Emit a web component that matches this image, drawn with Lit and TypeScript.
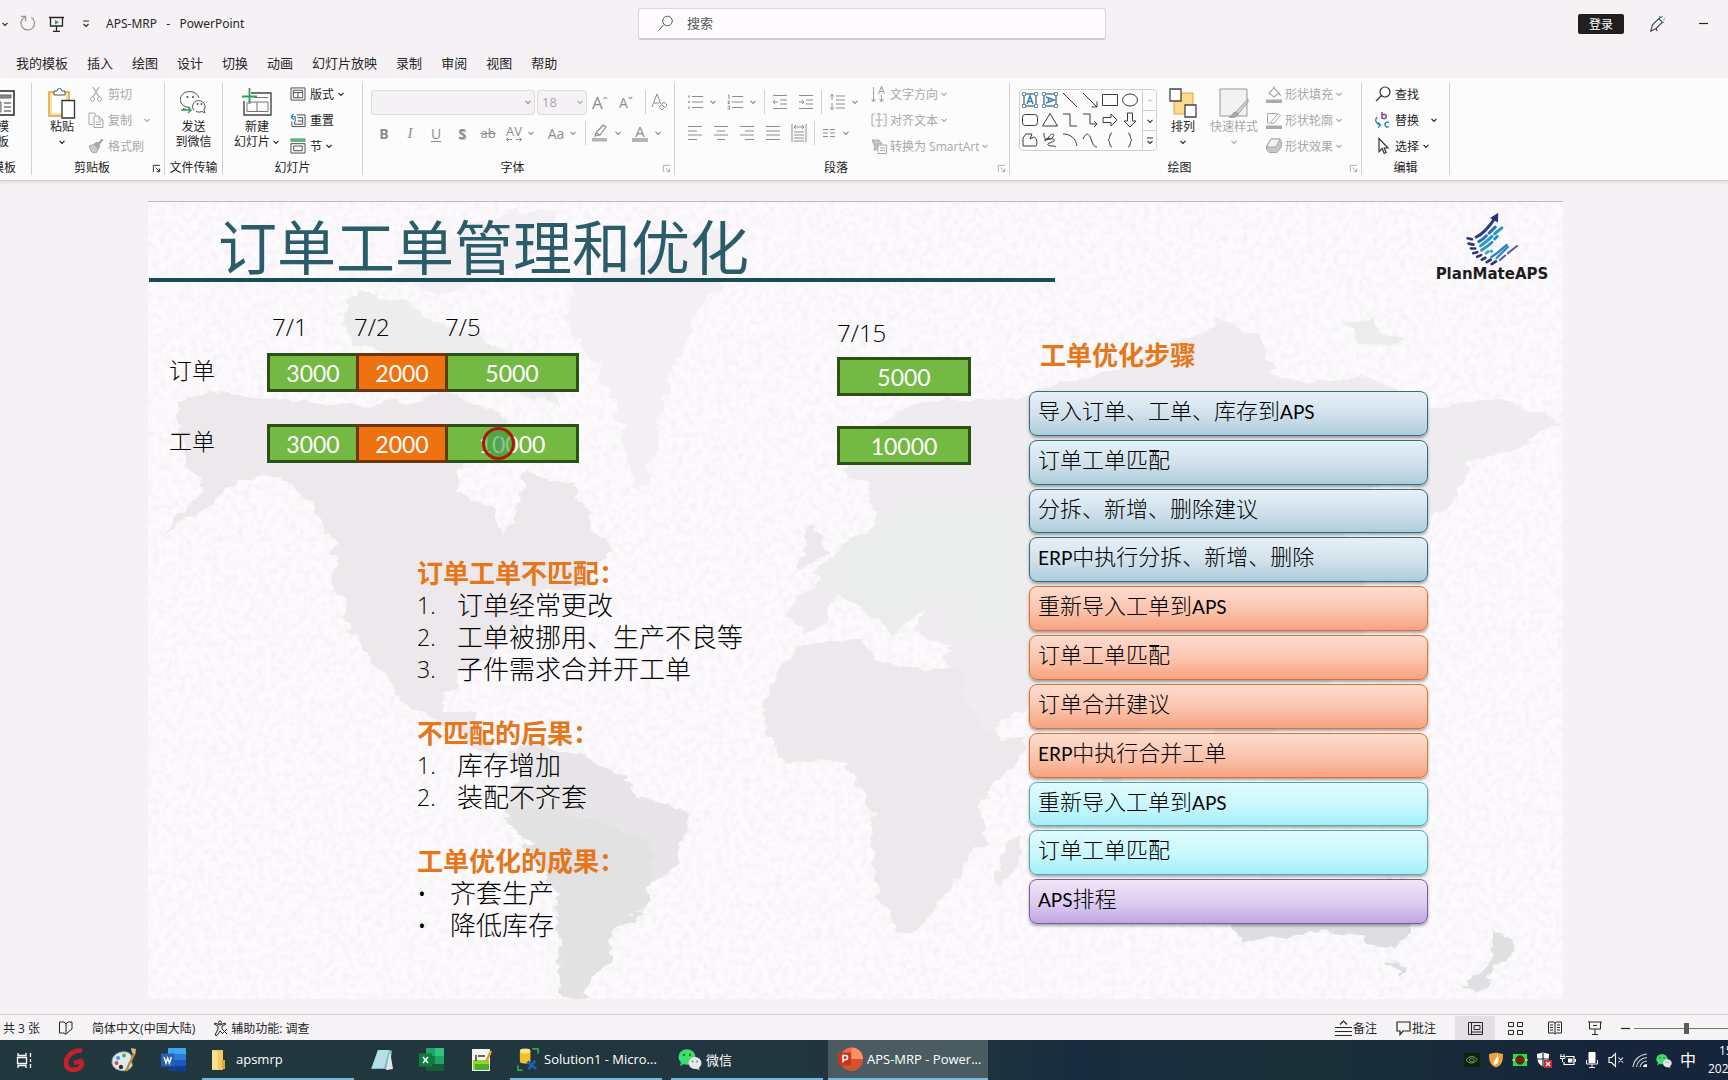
import { LitElement, html, svg, css, nothing, TemplateResult } from "lit";
import { customElement, property } from "lit/decorators.js";

/* ---------- icon set ---------- */

type Glyph = { w: number; h: number; body: TemplateResult };
const g = (w: number, h: number, body: TemplateResult): Glyph => ({ w, h, body });

const wechat = svg`
  <ellipse cx="9" cy="9" rx="8.5" ry="7.8" fill="#3fdc6e"/><path d="M3 14l-1 4 4-2z" fill="#3fdc6e"/>
  <circle cx="6" cy="7" r="1.2" fill="#1d6b38"/><circle cx="12" cy="7" r="1.2" fill="#1d6b38"/>
  <ellipse cx="17" cy="15" rx="6.5" ry="6" fill="#e6e8e8"/><path d="M20 19l2 3-4-1z" fill="#e6e8e8"/>
  <circle cx="14.8" cy="13.5" r="1" fill="#888"/><circle cx="19" cy="13.5" r="1" fill="#888"/>`;

const ICONS: Record<string, Glyph> = {
  chev: g(8, 8, svg`<path d="M1.5 2.8L4 5.3 6.5 2.8" stroke-width="1.2"/>`),
  launch: g(10, 10, svg`<path d="M1.5 9V1.5H9M4 4l4.5 4.500M8.500 5v3.500H5"/>`),
  redo: g(18, 18, svg`<path d="M2 1.500h5v5M6.500 2a7.200 7.200 0 1 0 6.500 .500" stroke="#999" stroke-width="1.4"/>`),
  present: g(16, 16, svg`<path d="M0 1.500h15M1.500 2v8h12V2M7.500 10v5M4 15.500h7" stroke-width="1.3"/><path d="M6 4l4 2.200-4 2.200z" fill="#3b9a5a" stroke="none"/>`),
  quick: g(8, 8, svg`<path d="M1 1h6M1.500 4L4 6.500 6.500 4" stroke-width="1.2"/>`),
  search: g(17, 17, svg`<circle cx="10.500" cy="6" r="4.800" stroke="#555"/><path d="M7 9.500L1.500 15.500" stroke="#555"/>`),
  pen: g(20, 20, svg`<path d="M3 18l2-7 7-7 4 4-7 7zM12 4l3-2M9 15l1 3" stroke="#444" stroke-width="1.2"/><path d="M13 1v2M16 1l-1 2M19 4l-2 1M18 8h-2" stroke="#2a8fc4"/>`),
  minus: g(9, 9, svg`<path d="M0 4.500h9" stroke-width="1.200"/>`),
  template: g(26, 28, svg`<rect x="1" y="2" width="24" height="24" stroke-width="1.500"/><path d="M5 6h17v3H5z" fill="#888" stroke="#666"/><path d="M5 13h7v10H5z" fill="#ccc" stroke="#666"/><path d="M15 14h7M15 18h7M15 22h7" stroke="#777" stroke-width="1.500"/>`),
  paste: g(30, 32, svg`<path d="M2 5h20v24H2z" fill="#fbe0a8" stroke="#e5a02e" stroke-width="1.500"/><path d="M5 8h14v18H5z" fill="#fff" stroke="none"/><path d="M7 8V4h3a2.500 2.500 0 0 1 5 0h3v4z" fill="#fff" stroke="#555"/><path d="M15 13.500h12.500V31H15z" fill="#fff" stroke="#333" stroke-width="1.300"/>`),
  cut: g(16, 16, svg`<path d="M5 1l6 10M11 1L5 11" stroke-width="1.200"/><circle cx="4.500" cy="13" r="2"/><circle cx="11.500" cy="13" r="2"/>`),
  copy: g(16, 16, svg`<path d="M5 12.500H1V1h5l2 2"/><path d="M6 4h5l4 4v7.500H6zM11 4v4h4M8 10h5M8 12.500h5"/>`),
  brush: g(16, 16, svg`<path d="M1 8l6-2 4 4-3 5-2-1-1 1-2-2z" fill="#ccc"/><path d="M6 6l3-2 1 1 4-4 1 1-4 5 1 1-2 3z" fill="#aaa"/>`),
  send: g(28, 26, svg`<path d="M4 18l-1 2 3-1M10 17.500A9.500 8 0 1 1 19 8" stroke="#555"/><circle cx="7.500" cy="7" r="1" fill="#444" stroke="none"/><circle cx="13" cy="7" r="1" fill="#444" stroke="none"/><path d="M14 20.500A6.300 6 0 1 1 24 20l1 3-3-1.500a7 7 0 0 1-6 0" stroke="#555"/><circle cx="17.500" cy="14" r=".9" fill="#444" stroke="none"/><circle cx="21.500" cy="14" r=".9" fill="#444" stroke="none"/><path d="M1 20h10M8 17l3 3-3 3" stroke="#3a9c5c" stroke-width="1.400"/>`),
  newslide: g(32, 30, svg`<path d="M10 5h20v22H3V13" stroke="#444" stroke-width="1.400"/><path d="M13 9.500h14M6 14v9.500h21V14H7M16 14v9.500" stroke="#777"/><path d="M8.500 0v16M1 8.500h15" stroke="#2f9e57" stroke-width="1.800"/>`),
  layout: g(17, 15, svg`<path d="M1 1h15v13H1zM3.500 3.500h10v8h-10zM3.500 6h10M8.500 6v5.500" stroke="#444"/>`),
  reset: g(17, 16, svg`<path d="M7 2h9v12.500H2V9M8 5h5.500v7H5V9M8 8.500h5" stroke="#444"/><path d="M1 4h4.500v5M1 4l3-3M1 4l3 3" stroke="#2683bd" stroke-width="1.300"/>`),
  section: g(17, 17, svg`<path d="M1 1h15v2.500H1z" fill="#7dc298" stroke="#3a9c5c"/><path d="M1 6h15v10H1zM4 8.500h9v5H4z" stroke="#444"/>`),
  fontclear: g(18, 18, svg`<path d="M2 14L7 1l4 10M3.500 10h6"/><path d="M9 14l5-5 3 3-5 5zM11.500 11.500l3 3"/>`),
  hilite: g(16, 18, svg`<path d="M4 9l7-8 3 2-6 8zM4 9l-1 3 5-1" stroke-width="1.200"/><path d="M0 14h15v3.500H0z" fill="#b5b3b5" stroke="none"/>`),
  bullets: g(16, 16, svg`<path d="M5 2.500h11M5 8h11M5 13.500h11"/><path d="M1 1.500h2v2H1zM1 7h2v2H1zM1 12.500h2v2H1z" fill="#aaa" stroke="none"/>`),
  numbers: g(16, 16, svg`<path d="M5 2.500h11M5 8h11M5 13.500h11M1 1h1v4M0.500 7h2L1 9.500h2M0.500 12h2v3h-2"/>`),
  outdent: g(16, 16, svg`<path d="M1 1.500h14M8 6h7M8 10h7M1 14.500h14M6 8H1M3 6L1 8l2 2"/>`),
  indent: g(16, 16, svg`<path d="M1 1.500h14M8 6h7M8 10h7M1 14.500h14M1 8h5M4 6l2 2-2 2"/>`),
  spacing: g(16, 16, svg`<path d="M7 2h9M7 6h9M7 10h9M7 14h9M3 0v6M3 9v7M1 2.500L3 .500l2 2M1 13.500l2 2 2-2"/>`),
  left: g(16, 16, svg`<path d="M1 1.500h14M1 6h9M1 10h14M1 14.500h9"/>`),
  center: g(16, 16, svg`<path d="M1 1.500h14M4 6h8M1 10h14M4 14.500h8"/>`),
  right: g(16, 16, svg`<path d="M1 1.500h14M6 6h9M1 10h14M6 14.500h9"/>`),
  justify: g(16, 16, svg`<path d="M1 1.500h14M1 6h14M1 10h14M1 14.500h14"/>`),
  distribute: g(16, 18, svg`<path d="M1 0v18M15 0v18M3 3h10M5 1L3 3l2 2M11 1l2 2-2 2M3 8h10M3 11h10M3 14h10M3 17h10"/>`),
  columns: g(14, 14, svg`<path d="M1 3.500h5M8 3.500h5M1 7h5M8 7h5M1 10.500h5M8 10.500h5"/>`),
  textdir: g(16, 17, svg`<path d="M2.500 1v14M.500 13l2 2.500 2-2.500M10.500 9v6M8.500 13l2 2.500 2-2.500M7.500 8l3-7.500 3 7.500M8.500 5.500h4" stroke-width="1.100"/>`),
  aligntext: g(16, 16, svg`<path d="M4 2H1v12h3M12 2h3v12h-3M4 8h8M8 1v14M6 3l2-2 2 2M6 13l2 2 2-2"/>`),
  smartart: g(16, 16, svg`<path d="M1 2h7l3 4H5l2 3-2 3H3l1-3z" fill="#ccc"/><path d="M7 7h8.500v8.500H7zM9 10h5M9 12.500h5" fill="#fff"/>`),
  arrange: g(28, 30, svg`<path d="M5 5h19v21H5z" fill="#fbd98d" stroke="#e2a440"/><path d="M1 1h11v12H1zM16 17h11v12H16z" fill="#fff" stroke="#444" stroke-width="1.300"/>`),
  styles: g(30, 30, svg`<path d="M1 1h27v27H1z" fill="#f3f1f3" stroke="#999"/><path d="M29 11L17 24l2 2 10-12z" fill="#d8d6d8" stroke="#999"/><path d="M17 24c-4 0-3 4-7 5 4 1 9 0 9-3z" fill="#aaa" stroke="#999"/>`),
  fill: g(16, 17, svg`<path d="M3 7l5-5 5 5-5 4zM8 2V0M13 7l1.500 3" stroke-width="1.200"/><path d="M0 13.500h16V17H0z" fill="#aaa8aa" stroke="none"/>`),
  outline: g(16, 17, svg`<path d="M11 1.500H1.500V11H4M5 10l7-8.500 2.500 2L8 11l-3 .500z"/><path d="M0 13.500h16V17H0z" fill="#aaa8aa" stroke="none"/>`),
  effect: g(16, 16, svg`<path d="M5 1h9l1.500 3v5L11 14.500H3L.500 11V8z" fill="#c8c6c8"/><path d="M5 1h9l-4 8H.500z" fill="#f2f0f2"/>`),
  find: g(16, 16, svg`<circle cx="10" cy="6" r="5" stroke="#333" stroke-width="1.200"/><path d="M6.500 9.500L1 15" stroke="#333" stroke-width="1.300"/>`),
  replace: g(16, 18, svg`<path d="M2 6C-.500 9 1 13 5 14M3 11.500l2.500 2.500L3 16.500" stroke="#2b82b8" stroke-width="1.300"/><path d="M7 1v7M7 5.500a2.200 2.200 0 1 1 0 .1" stroke="#8c3a9a" stroke-width="1.400"/><path d="M14 11.500a2.500 2.500 0 1 0 0 4" stroke="#2b82b8" stroke-width="1.400"/>`),
  select: g(16, 18, svg`<path d="M4 1.500v13l3.200-3 2 5 2-1-2-4.500H13z" stroke="#333" stroke-width="1.200"/>`),
  /* status bar */
  book: g(16, 14, svg`<path d="M8 3L6 1H1.500v11H6l2 1.500 1-1M8 3v10M8 3l2-2h4v7M9 12l5-4"/>`),
  access: g(16, 16, svg`<circle cx="7" cy="2.500" r="1.500"/><path d="M1 4l4 2v3l-3 6 2 .500L7 11l2 2M13 4L9 6v3M1 4l1-1 5 2 5-2 1 1M9 9l5 5M14 9l-5 5"/>`),
  notes: g(17, 16, svg`<path d="M0 7.500h17M0 11.500h17M0 15.500h17M5 4.500L8.500 1 12 4.500" stroke-width="1.200"/>`),
  comment: g(15, 15, svg`<path d="M1 1h13v9H7l-3 3.500V10H1z" stroke-width="1.200"/>`),
  normal: g(15, 13, svg`<path d="M.500.500h14v12H.500zM3.500.500v12M6 3.500h6v4H6zM3.500 10h11"/>`),
  sorter: g(15, 13, svg`<path d="M.500.500h5v4h-5zM9.500.500h5v4h-5zM.500 8.500h5v4h-5zM9.500 8.500h5v4h-5z"/>`),
  reading: g(14, 14, svg`<path d="M.500 1h5L7 2l1.500-1h5v11h-5L7 13l-1.500-1h-5zM7 2v11M2 4h3M2 6.500h3M2 9h3M9 4h3M9 6.500h3M9 9h3"/>`),
  show: g(14, 14, svg`<path d="M0 1h14M1.500 1v7h11V1M7 8v5M4 13.500h6M5 4.500h4"/>`),
  /* gallery shapes */
  tb: g(16, 16, svg`<path d="M2 2h12v12H2z" stroke="#333"/><path d="M.500.500h3v3h-3zM12.500.500h3v3h-3zM.500 12.500h3v3h-3zM12.500 12.500h3v3h-3z" fill="#fff" stroke="#4a90b8"/><path d="M5 12l3-8 3 8M6 9.500h4" stroke="#2683bd" stroke-width="1.500"/>`),
  tbv: g(16, 16, svg`<path d="M2 2h12v12H2z" stroke="#333"/><path d="M.500.500h3v3h-3zM12.500.500h3v3h-3zM.500 12.500h3v3h-3zM12.500 12.500h3v3h-3z" fill="#fff" stroke="#4a90b8"/><path d="M4 5l8 3-8 3M6.500 6v4" stroke="#2683bd" stroke-width="1.500"/>`),
  line: g(16, 16, svg`<path d="M1 1l14 14"/>`),
  arrow: g(16, 16, svg`<path d="M1 1l14 14M15 9.500V15H9.500"/>`),
  rect: g(16, 16, svg`<path d="M.500 2.500h15v11H.500z"/>`),
  oval: g(16, 16, svg`<ellipse cx="8" cy="8" rx="7.500" ry="6"/>`),
  round: g(16, 16, svg`<rect x=".500" y="2.500" width="15" height="11" rx="3"/>`),
  tri: g(16, 16, svg`<path d="M8 1.500L15.500 14H.500z"/>`),
  elbow: g(16, 16, svg`<path d="M1 2h7v12h7"/>`),
  elbowa: g(16, 16, svg`<path d="M1 2h7v10h7M12 9l3 3-3 3"/>`),
  rarrow: g(16, 16, svg`<path d="M1 5.500h8V2l6 6-6 6v-3.500H1z"/>`),
  darrow: g(16, 16, svg`<path d="M5.500 1v8H2l6 6 6-6h-3.500V1z"/>`),
  free: g(16, 16, svg`<path d="M1 14V6l3-4h6l-2 5 4-2c4 1 3 9 2 9z"/>`),
  scrib: g(16, 16, svg`<path d="M2 1c-1 8 5 8 9 4 3-4-2-4-5 1s-5 2-2 1c5-1 10 0 8 2s-8 2-6 4 7 0 8 2"/>`),
  arc: g(16, 16, svg`<path d="M1 2c8 0 13 5 14 12"/>`),
  curve: g(16, 16, svg`<path d="M1 7c3-7 6-6 8 0s3 8 6 8"/>`),
  lbrace: g(16, 16, svg`<path d="M10 1C7 1 8.500 7 6 8c2.500 1 1 7 4 7"/>`),
  rbrace: g(16, 16, svg`<path d="M6 1c3 0 1.500 6 4 7-2.500 1-1 7-4 7"/>`),
  up: g(8, 8, svg`<path d="M2 5.500l2-2 2 2" stroke="#aaa"/>`),
  /* task bar */
  taskview: g(17, 17, svg`<path d="M2 1v2.500h8V1M2 16v-2.500h8V16M1.500 5.500h9v6h-9zM14.500 1v4M14.500 12v4M14.500 7v3" stroke="#fff" stroke-width="1.300"/>`),
  gee: g(24, 24, svg`<path d="M20 3C12 1 4 8 4 15c0 6 5 8 12 6 4-2 5-6 3-8l-7 2" stroke="#c81f2c" stroke-width="4.500"/>`),
  paint: g(26, 26, svg`<path d="M1 15C1 8 8 4 15 5c5 1 7 5 5 8-1 2 2 3 1 6-2 4-8 6-13 4-4-1-7-4-7-8z" fill="#dfe9f0" stroke="#8fa7b8"/><circle cx="7" cy="11" r="2" fill="#3c9be0" stroke="none"/><circle cx="13" cy="8.500" r="2" fill="#4cb04c" stroke="none"/><circle cx="5.500" cy="16" r="2" fill="#e04a3a" stroke="none"/><circle cx="10" cy="20" r="2.200" fill="#333" stroke="none"/><path d="M24 5l-9 19" stroke="#c98a35" stroke-width="2.500"/><path d="M20 1l5 1-1 5-3-1z" fill="#d9b98a" stroke="none"/>`),
  word: g(26, 24, svg`<g stroke="none"><path d="M7 0h18v6H7z" fill="#41a5ee"/><path d="M7 6h18v6H7z" fill="#2b7cd3"/><path d="M7 12h18v6H7z" fill="#185abd"/><path d="M7 18h18v5H7z" fill="#103f91"/><path d="M0 5.500h13v13H0z" fill="#2a5fb8"/></g><path d="M3 9l2 6 1.700-5L8.400 15l2-6" stroke="#fff" stroke-width="1.400"/>`),
  folder: g(15, 24, svg`<g stroke="none"><path d="M1 3h11v20H1z" fill="#f3c95c"/><path d="M1 3l6 2v18l-6-1z" fill="#fbe08f"/><path d="M11 13h3v9h-3z" fill="#d9a93e"/></g>`),
  notepad: g(24, 24, svg`<g stroke="none"><path d="M8 2h12l2 1-3 19-4-1H1z" fill="#7fb9c6"/><path d="M8 2h11l-5 18H2z" fill="#b5e0e9"/><path d="M20 3l3 18-7 1z" fill="#dfe6e8"/></g>`),
  excel: g(26, 24, svg`<g stroke="none"><path d="M7 0h18v23H7z" fill="#21a366"/><path d="M16 0h9v8h-9z" fill="#33c481"/><path d="M7 8h9v8H7z" fill="#107c41"/><path d="M7 16h18v7H7z" fill="#185c37"/><path d="M0 5.500h13v13H0z" fill="#107c41"/></g><path d="M4 9l5 6M9 9l-5 6" stroke="#fff" stroke-width="1.600"/>`),
  npp: g(22, 24, svg`<g stroke="none"><path d="M1 1h18v22H1z" fill="#f4f7ee"/><path d="M2 12h16v10H2z" fill="#8ed82e"/><path d="M4 16h14v6H4z" fill="#4caf2c"/></g><path d="M5 7v6M7 8h7" stroke="#333" stroke-width="1.400"/><path d="M20 3l-5 11" stroke="#e39a2c" stroke-width="2.500"/>`),
  ssms: g(24, 24, svg`<path d="M3 3v11c0 3 11 3 11 0V3z" fill="#f2c12e" stroke="none"/><ellipse cx="8.500" cy="3" rx="5.500" ry="2.500" fill="#fbe48f" stroke="none"/><path d="M16 1h6v5M1 18v5h5" stroke="#3fa04a" stroke-width="1.800"/><path d="M11 14l9 8M19 13l-7 9" stroke="#1f5fb0" stroke-width="2.800"/>`),
  wechat: g(24, 22, svg`<g stroke="none">${wechat}</g>`),
  ppt: g(25, 24, svg`<g stroke="none"><circle cx="13.500" cy="12" r="11.500" fill="#ed6c47"/><path d="M13.500.500A11.500 11.500 0 0 1 25 12H13.500z" fill="#ff8f6b"/><path d="M2 12h23a11.500 11.500 0 0 1-23 0z" fill="#d35230"/><path d="M0 5.500h13v13H0z" fill="#c2371f"/></g><path d="M5 15.500v-7h2.500a2 2 0 0 1 0 4.200H5" stroke="#fff" stroke-width="1.500"/>`),
  nvidia: g(16, 16, svg`<path d="M0 1h16v14H0z" fill="#10200f" stroke="none"/><path d="M2 8c3-5 9-4 11-.500C10 12 5 12 2 8zM5 8c2-2.500 4-2 5.500 0C9 10 6.500 10 5 8" stroke="#6fae5a"/>`),
  shield: g(16, 16, svg`<path d="M1 2l7-1.500L15 2c0 7-1 11-7 13.500C2 13 1 9 1 2z" fill="#f0a13a" stroke="none"/><path d="M9 2c2 4-5 6-3 11 5-1 6-6 3-11z" fill="#fff" stroke="none"/>`),
  green: g(16, 16, svg`<path d="M1 2h14v12H1z" fill="#2bdc3c" stroke="none"/><path d="M0 8h16" stroke="#e6f7d0"/><circle cx="8" cy="8" r="4.200" fill="#8a1418" stroke="#184a18"/>`),
  defender: g(16, 16, svg`<path d="M1 2l6-1.500L13 2c0 7-1 10-6 12.500C2 12 1 9 1 2z" fill="#fff" stroke="none"/><path d="M7 1v13M1 7h12" stroke="#16283c" stroke-width="1.200"/><path d="M8 8h8v8H8z" fill="#c82a35" stroke="none"/><path d="M10 10l4 4M14 10l-4 4" stroke="#fff" stroke-width="1.200"/>`),
  battery: g(16, 16, svg`<path d="M6 4.500h8v8H4V10M15.500 7v3" stroke="#fff" stroke-width="1.200"/><path d="M8 6.500h4.500v4H8z" fill="#fff" stroke="none"/><path d="M1 2v2M4 2v2M0 4.500h5v2H0zM2.500 7v3" stroke="#fff"/>`),
  mic: g(16, 16, svg`<rect x="4.500" y="0" width="7" height="11" rx="1" fill="#fff" stroke="none"/><path d="M2.500 8v4h11V8M8 12v3M5 15.500h6" stroke="#fff"/>`),
  mute: g(16, 16, svg`<path d="M1 5.500h2.500l4-4v13l-4-4H1zM10.500 5.500l4.500 5M15 5.500l-4.500 5" stroke="#fff" stroke-width="1.100"/>`),
  wifi: g(16, 16, svg`<path d="M1 15C2 8 7 3 15 2M4.500 15C5 10 9 6 15 5.500M8 15c.500-3 3-5.500 7-6" stroke="#c8d2dc" stroke-width="1.100"/><path d="M11 15c0-2 2-3 4-3v3z" fill="#fff" stroke="none"/>`),
};

const icon = (name: string, size?: number) => {
  const i = ICONS[name];
  const w = size ?? i.w;
  const h = size ? Math.round((size * i.h) / i.w) : i.h;
  return html`<svg width=${w} height=${h} viewBox="0 0 ${i.w} ${i.h}" fill="none" stroke="currentColor" aria-hidden="true">${i.body}</svg>`;
};

const shared = css`
  * { box-sizing: border-box; }
  button {
    font: inherit; color: inherit; background: none; border: 0; padding: 0; margin: 0;
    display: flex; align-items: center; white-space: nowrap;
  }
  svg { display: block; flex: none; }
`;

/* ---------- title bar and tabs ---------- */

@customElement("title-bar")
class TitleBar extends LitElement {
  static styles = [shared, css`
    :host { display: block; color: #262626; }
    .bar { display: grid; grid-template-columns: 638px minmax(200px, 468px) 1fr; height: 47px; align-items: center; }
    .quick { display: flex; align-items: center; font-size: 13px; gap: 13px; padding-left: 1px; }
    .quick button:first-child { margin-right: -3px; }
    .custom { margin-left: 4px; }
    .caption { white-space: pre; font-family: "Noto Sans", sans-serif; font-size: 12px; padding-left: 3px; }
    .search {
      display: flex; align-items: center; gap: 13px; height: 32px; padding-left: 18px; background: #fdfbfd;
      border: 1px solid #d8d4d8; border-bottom: 2px solid #cdc9cd; border-radius: 3px;
    }
    .search input { flex: 1; min-width: 0; border: 0; outline: 0; background: none; font: inherit; font-size: 13px; padding: 0; }
    .search input::placeholder { color: #555; opacity: 1; }
    .right { display: flex; align-items: center; justify-content: flex-end; padding-right: 20px; }
    .login { background: #1f1f1f; color: #fff; width: 46px; height: 20px; justify-content: center; border-radius: 2px; font-size: 12px; margin-right: 24px; }
    .pen { margin-right: 33px; }
    nav { display: flex; gap: 19px; height: 31px; padding-left: 16px; font-size: 13px; }
  `];
  render() {
    const tabs = ["我的模板", "插入", "绘图", "设计", "切换", "动画", "幻灯片放映", "录制", "审阅", "视图", "帮助"];
    return html`
      <header class="bar">
        <div class="quick">
          <button aria-label="撤消选项">${icon("chev")}</button>
          <button aria-label="重做">${icon("redo", 17)}</button>
          <button aria-label="从头开始">${icon("present")}</button>
          <button class="custom" aria-label="自定义快速访问工具栏">${icon("quick")}</button>
          <span class="caption">APS-MRP   -   PowerPoint</span>
        </div>
        <label class="search">${icon("search")}<input type="search" placeholder="搜索" aria-label="搜索" /></label>
        <div class="right">
          <button class="login">登录</button>
          <button class="pen" aria-label="画笔">${icon("pen", 18)}</button>
          <button aria-label="最小化">${icon("minus")}</button>
        </div>
      </header>
      <nav>${tabs.map((t) => html`<button>${t}</button>`)}</nav>`;
  }
}

/* ---------- ribbon ---------- */

const small = (ic: string, text: string, chev = 0) => html`
  <button class="small">${icon(ic, 16)}<span>${text}</span>${chev ? html`<span class=${chev > 1 ? "far" : "near"}>${icon("chev")}</span>` : nothing}</button>`;
const tool = (ic: string, label: string) => html`<button aria-label=${label}>${icon(ic)}</button>`;
const drop = (label: string) => html`<button class="drop" aria-label="${label}选项">${icon("chev")}</button>`;

@customElement("office-ribbon")
class OfficeRibbon extends LitElement {
  static styles = [shared, css`
    :host { display: block; background: #fdfcfd; border-bottom: 1px solid #d4d0d4; box-shadow: 0 1px 3px #d9d5d9; color: #222; font-size: 12px; position: relative; }
    .ribbon { display: flex; padding: 5px 0; }
    .group { flex: none; display: flex; flex-direction: column; height: 92px; border-right: 1px solid #d2cfd2; }
    .body { display: flex; flex: 1; }
    .foot { display: flex; align-items: center; height: 14px; line-height: 14px; }
    .foot span { flex: 1; text-align: center; white-space: nowrap; }
    .foot button { width: 12px; }
    .off { color: #a9a6a9; }
    .dim { color: #8f8c8f; }
    .big { flex-direction: column; justify-content: flex-start; line-height: 15px; padding-top: 3px; }
    .big .pic { height: 33px; display: flex; align-items: center; justify-content: center; }
    .big .row { display: flex; align-items: center; gap: 2px; }
    .big .tip { height: 15px; display: flex; align-items: center; }
    .col { display: flex; flex-direction: column; justify-content: space-between; height: 76px; margin-top: -1px; }
    .small { height: 24px; gap: 4px; }
    .near { margin-left: -1px; }
    .far { margin-left: 7px; }
    .g0 { width: 32px; overflow: hidden; align-items: flex-end; }
    .g0 .big { padding-right: 16px; align-items: flex-end; }
    .g0 .big span { margin-right: 6px; }
    .g0 .foot { padding-right: 15px; }
    .g1 { width: 133px; } .g1 .body { padding-left: 14px; gap: 10px; } .g1 .big { width: 32px; }
    .g2 { width: 58px; } .g2 .big { width: 57px; }
    .g3 { width: 140px; } .g3 .body { padding-left: 10px; gap: 9px; } .g3 .big { width: 48px; }
    .g4 { width: 312px; }
    .g5 { width: 335px; }
    .g6 { width: 352px; } .g6 .body { padding-left: 9px; gap: 10px; }
    .g7 { width: 88px; } .g7 .body { padding-left: 13px; }
    .lines { display: flex; flex-direction: column; gap: 7px; padding: 7px 0 0 8px; }
    .line { display: flex; align-items: center; height: 24px; }
    .combo { position: relative; display: flex; align-items: center; border: 1px solid #dedade; background: #f5f2f5; border-radius: 3px; height: 25px; }
    .combo select { appearance: none; border: 0; background: none; font: inherit; color: inherit; width: 100%; height: 100%; padding: 0 4px; opacity: 1; }
    .combo svg { position: absolute; right: 2px; }
    .face { width: 164px; margin-right: 2px; } .size { width: 50px; }
    .letters { font-size: 15px; }
    .letters button { justify-content: center; width: 26px; }
    .letters .drop, .pads .drop { width: 8px; }
    .b { font-weight: 700; } .i { font-style: italic; font-family: "Liberation Serif", serif; } .u { text-decoration: underline; text-underline-offset: 2px; }
    .s { font-weight: 700; text-shadow: 1px 1px 1px #bbb; } .st { text-decoration: line-through; }
    .f13 { font-size: 13px; } .f14 { font-size: 14px; }
    .letters .av { flex-direction: column; line-height: 12px; font-size: 13px; }
    .letters .tint { flex-direction: column; width: 16px; line-height: 14px; }
    .swatch { width: 16px; height: 4px; background: #b5b3b5; }
    .letters .w16 { width: 16px; }
    .gap6 { width: 6px; } .gap8 { width: 8px; } .gap10 { width: 10px; }
    .grow { font-size: 17px; }
    .sep { width: 1px; height: 24px; background: #d2cfd2; }
    .pads { display: flex; flex-direction: column; gap: 7px; width: 196px; padding: 7px 0 0 12px; }
    .pads .line { gap: 10px; }
    .pads .drop { margin-left: -4px; }
    .pads .sep { margin: 0 -3px; }
    .gallery { display: grid; grid-template-columns: 1fr 15px; width: 138px; height: 62px; margin-top: 6px; border: 1px solid #d2cfd2; border-radius: 4px; color: #3a3a3a; }
    .shapes { display: grid; grid-template-columns: repeat(6, 20px); align-items: center; padding-left: 2px; }
    .scroll { display: grid; grid-template-rows: 1fr 1fr 1fr; border-left: 1px solid #d2cfd2; }
    .scroll button { justify-content: center; }
    .scroll button + button { border-top: 1px solid #d2cfd2; }
    .styles { width: 50px; }
    .arr { width: 32px; }
    .g6 .col { margin-left: -3px; }
    .g5 .small, .g6 .small { gap: 3px; }
  `];
  private foot(label: string, launch = false, dim = false) {
    return html`<div class="foot"><span>${label}</span>${launch ? html`<button class=${dim ? "off" : ""} aria-label="${label}设置">${icon("launch", 9)}</button>` : nothing}</div>`;
  }
  render() {
    const shapes = ["tb", "tbv", "line", "arrow", "rect", "oval", "round", "tri", "elbow", "elbowa", "rarrow", "darrow", "free", "scrib", "arc", "curve", "lbrace", "rbrace"];
    return html`<div class="ribbon">
      <section class="group g0"><div class="body"><button class="big"><div class="pic">${icon("template")}</div><span>模</span><span>板</span></button></div>${this.foot("模板")}</section>

      <section class="group g1"><div class="body">
        <button class="big"><span class="pic">${icon("paste")}</span><span>粘贴</span><span class="tip">${icon("chev")}</span></button>
        <div class="col off">${small("cut", "剪切")}${small("copy", "复制", 2)}${small("brush", "格式刷")}</div>
      </div>${this.foot("剪贴板", true)}</section>

      <section class="group g2"><div class="body"><button class="big"><span class="pic">${icon("send")}</span><span>发送</span><span>到微信</span></button></div>${this.foot("文件传输")}</section>

      <section class="group g3"><div class="body">
        <button class="big"><span class="pic">${icon("newslide")}</span><span>新建</span><span class="row">幻灯片${icon("chev")}</span></button>
        <div class="col">${small("layout", "版式", 1)}${small("reset", "重置")}${small("section", "节", 1)}</div>
      </div>${this.foot("幻灯片")}</section>

      <section class="group g4"><div class="body"><div class="lines dim">
        <div class="line letters">
          <label class="combo face f13"><select aria-label="字体"><option></option></select>${icon("chev")}</label>
          <label class="combo size f13 off"><select aria-label="字号"><option>18</option></select>${icon("chev")}</label>
          <button class="grow" aria-label="增大字号">A<sup class="f13">ˆ</sup></button>
          <button class="f14" aria-label="减小字号">A<sup class="f13">ˇ</sup></button>
          <i class="gap6"></i><i class="sep"></i><button aria-label="清除格式">${icon("fontclear")}</button>
        </div>
        <div class="line letters">
          <button class="b f14">B</button><button class="i">I</button><button class="u f14">U</button><button class="s f14">S</button><button class="st f13">ab</button>
          <button class="av"><span>AV</span><svg width="16" height="5" viewBox="0 0 16 5" fill="none" stroke="currentColor"><path d="M0 2.500h6M10 2.500h6M2.500.500l-2 2 2 2M13.500.500l2 2-2 2"/></svg></button>${drop("字符间距")}
          <i class="gap8"></i><button class="f14">Aa</button>${drop("更改大小写")}
          <i class="gap8"></i><i class="sep"></i><i class="gap6"></i>
          <button class="w16" aria-label="突出显示">${icon("hilite")}</button><i class="gap6"></i>${drop("突出显示")}
          <i class="gap10"></i><button class="tint"><span>A</span><span class="swatch"></span></button><i class="gap6"></i>${drop("字体颜色")}
        </div>
      </div></div>${this.foot("字体", true, true)}</section>

      <section class="group g5"><div class="body">
        <div class="pads dim">
          <div class="line">${tool("bullets", "项目符号")}${drop("项目符号")}${tool("numbers", "编号")}${drop("编号")}<i class="sep"></i>${tool("outdent", "减少缩进")}${tool("indent", "增加缩进")}<i class="sep"></i>${tool("spacing", "行距")}${drop("行距")}</div>
          <div class="line">${tool("left", "左对齐")}${tool("center", "居中")}${tool("right", "右对齐")}${tool("justify", "两端对齐")}${tool("distribute", "分散对齐")}<i class="sep"></i>${tool("columns", "分栏")}${drop("分栏")}</div>
        </div>
        <div class="col off">${small("textdir", "文字方向", 1)}${small("aligntext", "对齐文本", 1)}${small("smartart", "转换为 SmartArt", 1)}</div>
      </div>${this.foot("段落", true, true)}</section>

      <section class="group g6"><div class="body">
        <div class="gallery"><div class="shapes">${shapes.map((s) => icon(s))}</div>
          <div class="scroll"><button aria-label="上一行">${icon("up")}</button><button aria-label="下一行">${icon("chev")}</button><button aria-label="更多形状">${icon("quick")}</button></div></div>
        <button class="big arr"><span class="pic">${icon("arrange")}</span><span>排列</span><span class="tip">${icon("chev")}</span></button>
        <button class="big styles off"><span class="pic">${icon("styles")}</span><span>快速样式</span><span class="tip">${icon("chev")}</span></button>
        <div class="col off">${small("fill", "形状填充", 1)}${small("outline", "形状轮廓", 1)}${small("effect", "形状效果", 1)}</div>
      </div>${this.foot("绘图", true, true)}</section>

      <section class="group g7"><div class="body"><div class="col">${small("find", "查找")}${small("replace", "替换", 2)}${small("select", "选择", 1)}</div></div>${this.foot("编辑")}</section>
    </div>`;
  }
}

/* ---------- slide ---------- */

type Tone = "green" | "orange";
type Cell = { v: string; tone: Tone; w: number; pointer?: boolean };

@customElement("order-bar")
class OrderBar extends LitElement {
  @property({ attribute: false }) cells: Cell[] = [];
  static styles = [shared, css`
    :host { display: flex; height: 39px; font: 23px Lato, "Noto Sans", sans-serif; color: #fff; }
    .cell { position: relative; display: flex; align-items: center; justify-content: center; border: 3px solid #2c5016; background: #74b943; }
    .cell + .cell { border-left-width: 0; }
    .cell.joined { border-right-width: 0; }
    .cell.orange { background: #ee7210; border-color: #6e340a; border-left: 3px solid #6e340a; border-right: 3px solid #5a3c10; }
    .ring { position: absolute; left: 34px; top: 0; width: 33px; height: 33px; border: 3px solid #b3150c; border-radius: 50%; background: #2f9e3590; }
    .beam { display: block; width: 2px; height: 17px; margin: 5px 0 0 14px; background: #6e8f8f; }
  `];
  render() {
    return this.cells.map((c, i) => html`<div class="cell ${c.tone} ${this.cells[i + 1]?.tone === "orange" ? "joined" : ""}" style="width:${c.w}px">
      <span>${c.v}</span>${c.pointer ? html`<span class="ring"><i class="beam"></i></span>` : nothing}</div>`);
  }
}

@customElement("slide-view")
class SlideView extends LitElement {
  static styles = [shared, css`
    :host { display: block; position: relative; border-top: 1px solid #bdbabd; background: #fcfafc; color: #000; overflow: hidden; }
    .map { position: absolute; inset: 0; width: 100%; height: 100%; }
    .content { position: relative; display: flex; flex-direction: column; }
    .head { display: flex; justify-content: space-between; height: 80px; }
    h1 { margin: 0 0 0 1px; flex: 0 1 906px; padding: 12px 0 0 69px; border-bottom: 4px solid #174c59; color: #2a5d69; font-size: 59px; font-weight: 400; line-height: 66px; height: 80px; white-space: nowrap; }
    .logo { display: flex; flex-direction: column; align-items: center; width: 116px; margin: 10px 13px 0 0; font: 700 15px "DejaVu Sans", sans-serif; line-height: 16px; color: #1d1d1f; }
    .main { display: flex; justify-content: space-between; padding-right: 135px; }
    .charts { display: flex; padding-left: 21px; font-size: 24px; }
    .chart { display: grid; grid-template-columns: 98px 312px; grid-template-rows: 9px 39px 39px; padding-top: 30px; row-gap: 32px; margin-right: 258px; }
    .dates { font-family: "Open Sans", "Noto Sans", sans-serif; font-weight: 300; line-height: 30px; height: 30px; }
    .chart .dates { grid-column: 2; display: grid; grid-template-columns: 82px 91px 1fr; padding-left: 5px; }
    .name { font-size: 23px; line-height: 35px; font-weight: 300; }
    .late { display: grid; grid-template-rows: 9px 39px 39px; row-gap: 30px; padding-top: 36px; }
    .notes { padding: 92px 0 0 269px; font-size: 26px; font-weight: 300; line-height: 32px; }
    h2 { margin: 0; font-size: 26px; line-height: 32px; color: #e5761a; font-weight: 700; }
    ol, ul { margin: 0 0 32px; padding: 0; list-style: none; }
    li { display: grid; grid-template-columns: 40px 1fr; }
    ul li { grid-template-columns: 33px 1fr; }
    .mark { font-family: "Open Sans", sans-serif; font-size: 23px; }
    .side { flex: 0 0 399px; padding-top: 55px; }
    .side h2 { padding-left: 11px; line-height: 36px; }
    .steps { display: grid; grid-auto-rows: 1fr; gap: 4px; height: 533px; margin: 18px 0 0; }
    .step { display: block; padding: 0 0 0 8px; font: 300 22px "Noto Sans CJK SC", sans-serif; line-height: 35px; border: 1px solid; border-radius: 8px; box-shadow: 0 2px 3px #0005; }
    .latin { font-family: Lato, sans-serif; font-weight: 400; font-size: 19px; }
    .blue { background: linear-gradient(#e6f1f7, #cfe0eb 55%, #adcddb); border-color: #2f6f7f; }
    .red { background: linear-gradient(#fddccf, #fbc3ac 55%, #f6a37f); border-color: #d8742f; }
    .cyan { background: linear-gradient(#e0fbfe, #c8f7fc 55%, #a2effa); border-color: #55aab2; }
    .violet { background: linear-gradient(#efe6f8, #dccbf0 55%, #c0a6e4); border-color: #80589c; }
  `];
  private map() {
    return html`<svg class="map" viewBox="9 23 1541 1526" preserveAspectRatio="none" aria-hidden="true">
      <defs>
        <filter id="rough" x="-5%" y="-5%" width="110%" height="110%">
          <feTurbulence type="fractalNoise" baseFrequency="0.035" numOctaves="3" seed="4"/>
          <feDisplacementMap in="SourceGraphic" scale="26" xChannelSelector="R" yChannelSelector="G"/>
        </filter>
        <filter id="grain" x="0" y="0" width="100%" height="100%">
          <feTurbulence type="fractalNoise" baseFrequency="0.14 0.08" numOctaves="2" seed="9"/>
          <feColorMatrix values="0 0 0 0 .84  0 0 0 0 .82  0 0 0 0 .84  1.1 0 0 0 -.43"/>
        </filter>
      </defs>
      <rect x="9" y="23" width="1541" height="1526" filter="url(#grain)"/>
      <g filter="url(#rough)" fill="#ece8eb">
        <path d="M45 400L90 385 160 405 240 415 300 400 330 385 375 420 400 440 350 520 345 580 385 610 390 660 405 640 420 540 470 560 500 650 515 690 480 760 440 770 400 850 385 900 345 920 345 960 330 970 335 1000 365 1000 370 1050 395 1085 370 1075 330 1020 290 985 255 910 230 840 215 760 210 680 185 600 160 555 130 545 110 565 60 620 20 670 55 600 70 570 45 500z"/>
        <path d="M470 180L640 60 635 180 600 260 570 400 560 560 540 575 525 500 515 400 470 260z" fill="#f3f0f3"/>
        <path d="M270 170L320 110 400 40 455 40 440 120 380 170 330 200z" fill="#f2f0f2"/>
        <path d="M215 250L240 190 280 215 320 250 370 280 440 360 460 420 410 390 340 350 290 320 235 290z" fill="#eeedee"/>
        <path d="M395 1065L430 1060 480 1080 525 1120 540 1160 595 1190 600 1220 580 1300 555 1340 540 1400 515 1420 510 1480 495 1500 485 1548 460 1548 455 1450 455 1340 440 1280 400 1210 400 1180 415 1130z" fill="#e8e5e8"/>
        <path d="M400 1180L440 1180 500 1210 550 1240 560 1330 540 1400 515 1420 510 1480 495 1500 485 1548 460 1548 455 1340 440 1280 405 1220z" fill="#e2e2e3"/>
        <path d="M720 870L790 860 800 900 850 920 890 910 905 980 940 1055 965 1050 950 1100 915 1170 920 1250 890 1310 870 1380 845 1415 825 1420 805 1350 795 1260 800 1200 780 1150 770 1095 740 1090 710 1100 685 1050 678 990 700 910z"/>
        <path d="M930 1310L945 1250 958 1240 955 1290 940 1335z"/>
        <path d="M735 640L750 700 715 725 725 680z"/>
        <path d="M720 850L705 800 715 770 745 750 735 730 770 680 805 640 790 560 765 540 775 480 830 420 880 400 960 400 1000 370 1060 350 1130 290 1180 250 1215 280 1240 360 1300 370 1330 350 1400 420 1480 400 1545 440 1520 480 1450 520 1430 600 1395 650 1390 560 1340 570 1300 620 1340 760 1330 900 1250 1000 1200 1100 1150 1000 1100 1000 1060 1150 1010 1000 980 960 960 1000 920 1040 890 930 880 870 840 850 850 800 820 860 800 820 760 770 750 830z" fill="#efecef"/>
        <path d="M740 760L770 680 830 610 960 590 960 850 890 850 900 790 860 770 850 800 820 850 790 800z" fill="#ebecec"/>
        <path d="M1310 250L1345 245 1350 270 1380 285 1370 300 1320 290z" fill="#ececed"/>
        <path d="M1180 1330L1385 1320 1390 1420 1370 1455 1330 1430 1290 1420 1200 1440z" fill="#dedddf"/>
        <path d="M1360 1480L1375 1478 1370 1500z" fill="#dedddf"/>
        <path d="M1478 1410L1498 1460 1470 1490 1462 1535 1446 1530 1470 1475z" fill="#e0dfe1"/>
      </g>
    </svg>`;
  }
  render() {
    const rowA: Cell[] = [{ v: "3000", tone: "green", w: 89 }, { v: "2000", tone: "orange", w: 92 }, { v: "5000", tone: "green", w: 131 }];
    const rowB: Cell[] = [{ v: "3000", tone: "green", w: 89 }, { v: "2000", tone: "orange", w: 92 }, { v: "10000", tone: "green", w: 131, pointer: true }];
    const steps: [string, string][] = [
      ["导入订单、工单、库存到APS", "blue"], ["订单工单匹配", "blue"], ["分拆、新增、删除建议", "blue"], ["ERP中执行分拆、新增、删除", "blue"],
      ["重新导入工单到APS", "red"], ["订单工单匹配", "red"], ["订单合并建议", "red"], ["ERP中执行合并工单", "red"],
      ["重新导入工单到APS", "cyan"], ["订单工单匹配", "cyan"], ["APS排程", "violet"],
    ];
    const list = (items: string[]) => items.map((t, i) => html`<li><span class="mark">${i + 1}.</span>${t}</li>`);
    const mixed = (t: string) => t.split(/([A-Z]+)/).filter(Boolean).map((p) => (/[A-Z]/.test(p) ? html`<span class="latin">${p}</span>` : p));
    return html`${this.map()}
      <div class="content">
        <div class="head">
          <h1>订单工单管理和优化</h1>
          <div class="logo">
            <svg width="56" height="54" viewBox="114 18 168 164" fill="none" stroke-width="9" stroke-linecap="round">
              <path d="M150 94C172 84 190 62 206 38" stroke="#2b3a86"/><path d="M192 36L217 20 216 50z" fill="#2b2f7c"/>
              <path d="M124 98l13 3M127 114l15 3M134 129l13 0M141 143l12-3M153 154l12-5M167 163l11-6M182 170l12-7M197 176l13-8" stroke="#2b3580" stroke-width="8"/>
              <path d="M158 108Q172 100 181 90M189 82L208 64" stroke="#2b6db5"/>
              <path d="M163 121Q185 105 198 92M206 84L228 66" stroke="#2797c9"/>
              <path d="M166 134Q186 122 198 110M206 100L214 92" stroke="#2797c9"/>
              <path d="M180 143L187 138M196 137l1 0" stroke="#3aa9d4"/>
              <path d="M196 155L214 142 243 118" stroke="#2b7fbf" stroke-width="7"/>
              <path d="M212 158L246 124" stroke="#2f8ac4" stroke-width="7"/>
              <path d="M222 164L238 150M246 143L274 121" stroke="#5557a0" stroke-width="6"/>
            </svg>
            <span>PlanMateAPS</span>
          </div>
        </div>
        <div class="main">
          <div>
            <div class="charts">
              <div class="chart">
                <div class="dates"><span>7/1</span><span>7/2</span><span>7/5</span></div>
                <span class="name">订单</span><order-bar .cells=${rowA}></order-bar>
                <span class="name">工单</span><order-bar .cells=${rowB}></order-bar>
              </div>
              <div class="late">
                <div class="dates">7/15</div>
                <order-bar .cells=${[{ v: "5000", tone: "green", w: 134 }]}></order-bar>
                <order-bar .cells=${[{ v: "10000", tone: "green", w: 134 }]}></order-bar>
              </div>
            </div>
            <div class="notes">
              <h2>订单工单不匹配：</h2><ol>${list(["订单经常更改", "工单被挪用、生产不良等", "子件需求合并开工单"])}</ol>
              <h2>不匹配的后果：</h2><ol>${list(["库存增加", "装配不齐套"])}</ol>
              <h2>工单优化的成果：</h2><ul><li><span>•</span>齐套生产</li><li><span>•</span>降低库存</li></ul>
            </div>
          </div>
          <div class="side">
            <h2>工单优化步骤</h2>
            <div class="steps">${steps.map(([t, c]) => html`<div class="step ${c}">${mixed(t)}</div>`)}</div>
          </div>
        </div>
      </div>`;
  }
}

/* ---------- status bar ---------- */

@customElement("status-bar")
class StatusBar extends LitElement {
  static styles = [shared, css`
    :host { display: flex; justify-content: space-between; height: 25px; border-top: 1px solid #d3cfd3; background: #f5f3f5; font-size: 12px; color: #262626; overflow: hidden; }
    .side { display: flex; align-items: center; padding-top: 1px; }
    .left { padding-left: 3px; gap: 18px; white-space: nowrap; }
    .left button { gap: 2px; }
    .txt { gap: 1px; margin-right: 19px; }
    .view { width: 40px; height: 24px; justify-content: center; }
    .on { background: #e4dfe4; }
    .minus { margin: 0 4px 0 6px; }
    input { appearance: none; width: 94px; height: 12px; margin: 0; background: linear-gradient(#777, #777) center / 100% 1px no-repeat; }
    input::-webkit-slider-thumb { appearance: none; width: 5px; height: 11px; background: #5c5c5c; }
  `];
  render() {
    return html`
      <div class="side left"><span>共 3 张</span><button aria-label="校对">${icon("book")}</button><button>简体中文(中国大陆)</button><button>${icon("access")}辅助功能: 调查</button></div>
      <div class="side">
        <button class="txt">${icon("notes")}备注</button><button class="txt">${icon("comment")}批注</button>
        <button class="view on" aria-label="普通视图">${icon("normal")}</button><button class="view" aria-label="幻灯片浏览">${icon("sorter")}</button>
        <button class="view" aria-label="阅读视图">${icon("reading")}</button><button class="view" aria-label="放映">${icon("show")}</button>
        <button class="minus" aria-label="缩小">${icon("minus")}</button>
        <input type="range" min="0" max="100" value="56" aria-label="缩放" />
      </div>`;
  }
}

/* ---------- task bar ---------- */

@customElement("task-bar")
class TaskBar extends LitElement {
  static styles = [shared, css`
    :host { display: flex; justify-content: space-between; height: 40px; background: linear-gradient(90deg, #22383f, #20353d 55%, #182c40 62%, #1a3038 75%, #16253b 92%); color: #fff; font-size: 13px; overflow: hidden; }
    .apps { display: flex; gap: 2px; }
    .app { width: 48px; justify-content: center; }
    .win { width: 152px; padding-left: 7px; gap: 4px; border-bottom: 2px solid #76b9de; }
    .wide { width: 5px; }
    .folder { padding-left: 9px; gap: 10px; }
    .active { width: 160px; padding-left: 10px; gap: 4px; background: #4a5c61; margin-left: 1px; }
    .tray { display: flex; align-items: center; gap: 8px; }
    .ime { font-size: 16px; line-height: 20px; width: 16px; }
    .clock { width: 20px; margin-left: 4px; font-size: 12px; line-height: 18px; overflow: hidden; }
    .clock span { display: block; }
    .time { padding-left: 11px; }
  `];
  render() {
    const app = (n: string, l: string) => html`<button class="app" aria-label=${l}>${icon(n)}</button>`;
    return html`
      <div class="apps">
        ${app("taskview", "任务视图")}${app("gee", "浏览器")}${app("paint", "画图")}${app("word", "Word")}
        <i></i><button class="win folder">${icon("folder")}apsmrp</button><i></i>
        ${app("notepad", "记事本")}${app("excel", "Excel")}${app("npp", "Notepad++")}
        <i></i><button class="win">${icon("ssms", 23)}Solution1 - Micro...</button><i class="wide"></i>
        <button class="win">${icon("wechat")}微信</button><i></i>
        <button class="win active">${icon("ppt")}APS-MRP - Power...</button>
      </div>
      <div class="tray">
        ${["nvidia", "shield", "green", "defender", "battery", "mic", "mute", "wifi"].map((n) => icon(n))}${icon("wechat", 16)}
        <span class="ime">中</span>
        <div class="clock"><span class="time">15</span><span>202</span></div>
      </div>`;
  }
}

@customElement("app-root")
class AppRoot extends LitElement {
  static styles = css`
    :host { display: flex; flex-direction: column; min-height: 100vh; overflow: hidden; background: #f5f1f5; font-family: "Open Sans", "Noto Sans CJK SC", "Noto Sans", sans-serif; }
    .stage { flex: 1; display: flex; padding: 20px 165px 15px 148px; }
    .slide { flex: 1; min-width: 0; }
  `;
  render() {
    return html`<title-bar></title-bar><office-ribbon></office-ribbon>
      <main class="stage"><slide-view class="slide"></slide-view></main>
      <status-bar></status-bar><task-bar></task-bar>`;
  }
}
